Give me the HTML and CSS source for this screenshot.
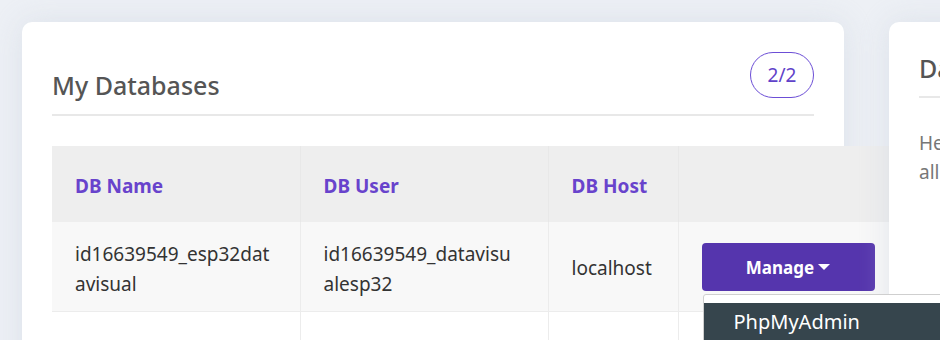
FILE: index.html
```html
<!DOCTYPE html>
<html lang="en">
<head>
    <meta charset="UTF-8">
    <title>My Databases</title>
    <link rel="stylesheet" href="styles.css">
</head>
<body>
    <div class="page">
        <div class="card db-card">
            <div class="card-head">
                <h2 class="card-title">My Databases</h2>
                <span class="count-badge">2/2</span>
            </div>

            <table class="db-table">
                <tr class="head-row">
                    <th class="col-name">DB Name</th>
                    <th class="col-user">DB User</th>
                    <th class="col-host">DB Host</th>
                    <th class="col-action"></th>
                </tr>
                <tr class="odd-row">
                    <td>id16639549_esp32datavisual</td>
                    <td class="user-cell">id16639549_datavisualesp32</td>
                    <td class="host-cell">localhost</td>
                    <td class="action-cell">
                        <div class="dropdown">
                            <button class="manage-btn">Manage<span class="caret"></span></button>
                            <div class="dropdown-menu">
                                <a class="dropdown-item active" href="#">PhpMyAdmin</a>
                            </div>
                        </div>
                    </td>
                </tr>
                <tr>
                    <td></td>
                    <td></td>
                    <td></td>
                    <td></td>
                </tr>
            </table>
        </div>

        <div class="card side-card">
            <h2 class="side-title">Database Info</h2>
            <p class="side-text">Here you can manage<br>all of your databases</p>
        </div>
    </div>
</body>
</html>
```

FILE: styles.css
```css
body{
    margin: 0;
    background: #edf0f5;
    font-family: "Noto Sans", "Open Sans", sans-serif;
    overflow: hidden;
}
.page{
    display: flex;
    gap: 45px;
    padding: 22px 0 0 22px;
    width: 1400px;
}
.card{
    background: #fff;
    border-radius: 10px;
    padding: 30px;
    box-shadow: 0 0 30px rgba(200, 208, 222, 0.45);
    height: 400px;
}
.db-card{
    width: 762px;
    flex: none;
}
.side-card{
    width: 300px;
    flex: none;
    position: relative;
    z-index: 1;
}

.card-head{
    display: flex;
    justify-content: space-between;
    align-items: flex-end;
    padding-bottom: 16px;
    border-bottom: 2px solid #e8e8e8;
}
.card-title{
    margin: 0;
    font-size: 25px;
    font-weight: 500;
    color: #555;
    line-height: 26px;
}
.count-badge{
    display: inline-block;
    width: 62px;
    height: 44px;
    line-height: 44px;
    text-align: center;
    border: 1px solid #6c4ed6;
    border-radius: 23px;
    color: #6042c9;
    font-size: 19px;
}

.db-table{
    margin-top: 30px;
    width: 837px;
    table-layout: fixed;
    border-collapse: collapse;
    font-size: 19px;
    color: #333;
}
.db-table th{
    background: #eeeeee;
    color: #6843cc;
    font-weight: bold;
    font-size: 19px;
    text-align: left;
    height: 76px;
    padding: 4px 23px 0;
    box-sizing: border-box;
    border-left: 1px solid #e8e8e8;
}
.db-table th:first-child{
    border-left: none;
}
.db-table td{
    border: 1px solid #ececec;
    padding: 17px 23px 11px;
    line-height: 30px;
    word-break: break-all;
    vertical-align: middle;
    height: 89px;
    box-sizing: border-box;
}
.db-table tr:first-child + tr td{
    border-top: none;
}
.db-table td:first-child{
    border-left: none;
}
.db-table .user-cell{
    padding-right: 30px;
}
.db-table .host-cell{
    white-space: nowrap;
    padding-top: 16px;
    padding-bottom: 12px;
}
.db-table .action-cell{
    padding-top: 15px;
    padding-bottom: 13px;
}
.col-name, .col-user{
    width: 248px;
}
.col-host{
    width: 130px;
}
.col-action{
    width: 211px;
}
.odd-row td{
    background: #f8f8f8;
}

.dropdown{
    position: relative;
}
.manage-btn{
    width: 173px;
    height: 48px;
    background: #5535ad;
    color: #fff;
    border: none;
    border-radius: 4px;
    font-family: inherit;
    font-size: 17px;
    font-weight: bold;
}
.caret{
    display: inline-block;
    margin-left: 4px;
    vertical-align: 4px;
    border-top: 6px solid #fff;
    border-left: 6px solid transparent;
    border-right: 6px solid transparent;
}
.dropdown-menu{
    position: absolute;
    left: 1px;
    top: 51px;
    width: 260px;
    background: #fff;
    border: 1px solid #cfcfcf;
    border-radius: 3px;
    padding: 8px 0;
    z-index: 5;
}
.dropdown-item{
    display: block;
    padding: 3px 30px;
    font-size: 20px;
    color: #fff;
    text-decoration: none;
    line-height: 32px;
}
.dropdown-item.active{
    background: #36454d;
}

.side-title{
    margin: 0;
    font-size: 25px;
    font-weight: 500;
    color: #555;
    line-height: 32px;
    padding-bottom: 12px;
    border-bottom: 2px solid #e8e8e8;
}
.side-text{
    margin: 31px 0 0;
    font-size: 19px;
    line-height: 29px;
    color: #777;
}
```
